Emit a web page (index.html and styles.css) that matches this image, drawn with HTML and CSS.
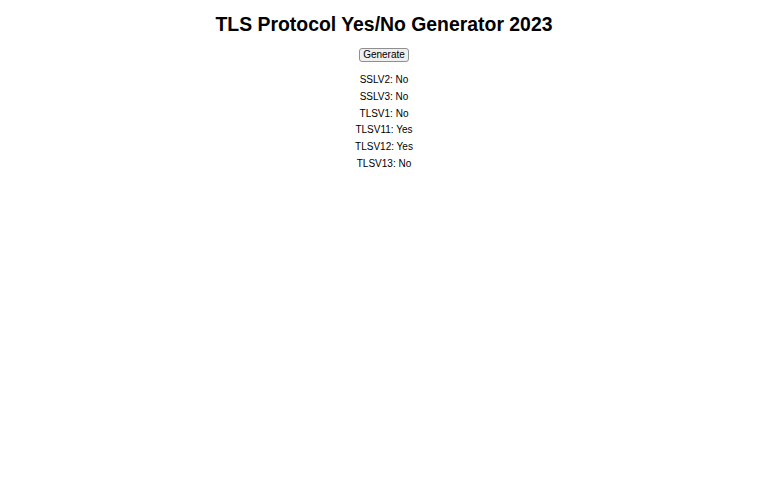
FILE: index.html
```html
<!DOCTYPE html>
<html lang="en">
<head>
  <meta charset="UTF-8" />
  <title>TLS Protocol Yes/No Generator 2023</title>
  <link rel="stylesheet" href="styles.css">
</head>
<body>
  <div class="page">
    <h1>TLS Protocol Yes/No Generator 2023</h1>
    <button type="button" id="generate">Generate</button>
    <div class="results">
      <p>SSLV2: No</p>
      <p>SSLV3: No</p>
      <p>TLSV1: No</p>
      <p>TLSV11: Yes</p>
      <p>TLSV12: Yes</p>
      <p>TLSV13: No</p>
    </div>
  </div>
</body>
</html>
```

FILE: styles.css
```css
body { font-family: "Liberation Sans", Arial, sans-serif; background: #fff; color: #000; margin: 0; padding: 8px; }
.page { display: flex; flex-direction: column; align-items: center; }
h1 { font-size: 19.4px; margin: 4px 0 0; line-height: 24px; }
button { margin-top: 12px; font-family: "Liberation Sans", Arial, sans-serif; font-size: 10px; line-height: 12px; padding: 0 3px; background: #efefef; border: 1px solid #8f8f8f; border-radius: 3px; }
.results { margin-top: 10px; display: flex; flex-direction: column; align-items: center; }
.results p { margin: 0; font-size: 10px; line-height: 16.8px; }
```
